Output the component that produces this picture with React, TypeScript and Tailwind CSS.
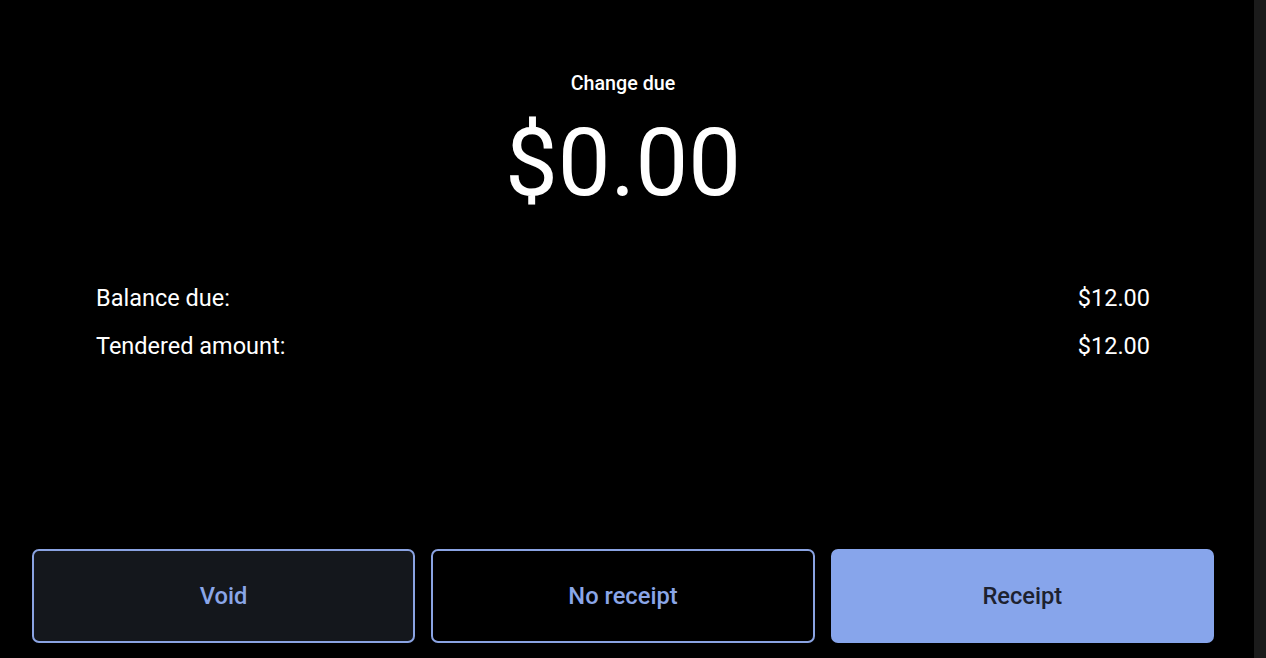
const rows = [
  { label: "Balance due:", value: "$12.00" },
  { label: "Tendered amount:", value: "$12.00" },
];

export default function App() {
  return (
    <div
      className="flex h-[658px] w-full bg-black text-white overflow-hidden"
      style={{ fontFamily: "Roboto, 'Liberation Sans', sans-serif" }}
    >
      {/* Main panel */}
      <div className="flex w-[1246px] flex-col">
        <div className="flex flex-col items-center pt-[72px]">
          <p className="text-[19.7px] font-medium leading-[24px]">Change due</p>
          <p className="mt-[15px] text-[94px] leading-[104px]">$0.00</p>
        </div>

        <div className="mt-[70px] flex flex-col gap-[22px] px-[96px]">
          {rows.map((row) => (
            <div key={row.label} className="flex items-center justify-between text-[23.5px] leading-[26px]">
              <span>{row.label}</span>
              <span>{row.value}</span>
            </div>
          ))}
        </div>

        <div className="mt-auto mb-[15px] grid grid-cols-3 gap-[16px] px-[32px]">
          <button className="h-[94px] rounded-[7px] border-2 border-[#8aa3e2] bg-[#14171c] pt-[2px] text-[23.7px] font-medium text-[#8aa6e8]">
            Void
          </button>
          <button className="h-[94px] rounded-[7px] border-2 border-[#8aa3e2] bg-black pt-[2px] text-[23.7px] font-medium text-[#8aa6e8]">
            No receipt
          </button>
          <button className="h-[94px] rounded-[7px] bg-[#87a5eb] pt-[2px] text-[23.7px] font-medium text-[#1d2230]">
            Receipt
          </button>
        </div>
      </div>

      {/* Side strip */}
      <div className="ml-[8px] w-[12px] bg-[#1b1b1b]" />
    </div>
  );
}
